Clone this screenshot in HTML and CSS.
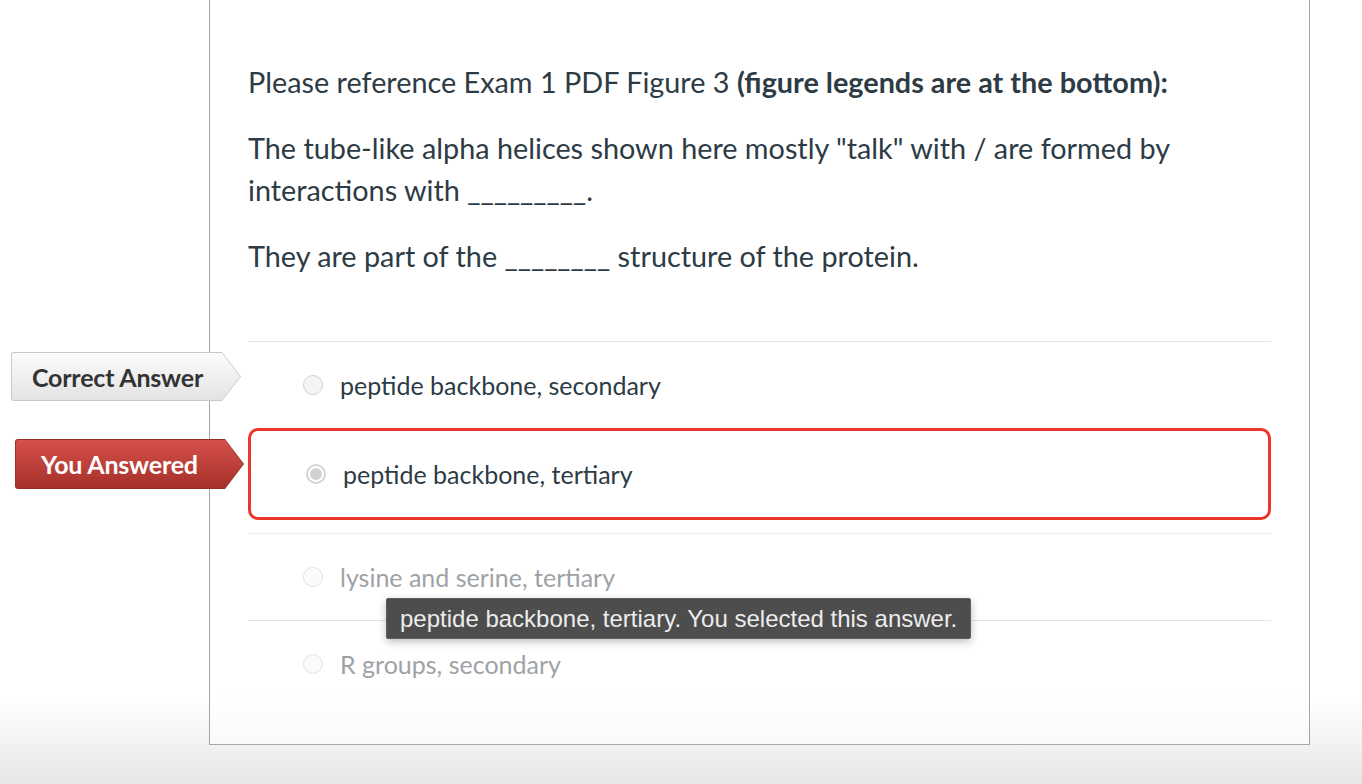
FILE: index.html
```html
<!DOCTYPE html>
<html lang="en">
<head>
    <meta charset="UTF-8">
    <meta name="viewport" content="width=device-width, initial-scale=1.0">
    <title>Quiz Results</title>
    <link rel="stylesheet" href="styles.css">
</head>
<body>
    <div id="page">
        <div id="question">
            <div class="question-text">
                <p>Please reference Exam 1 PDF Figure 3 <strong>(figure legends are at the bottom):</strong></p>
                <p>The tube-like alpha helices shown here mostly "talk" with / are formed by interactions with _________.</p>
                <p>They are part of the ________ structure of the protein.</p>
            </div>

            <div class="answers">
                <div class="answer correct">
                    <span class="answer-label label-correct"><span class="label-inner">Correct Answer</span></span>
                    <span class="radio"></span>
                    <span class="answer-text">peptide backbone, secondary</span>
                </div>
                <div class="answer selected">
                    <span class="answer-label label-wrong"><span class="label-inner">You Answered</span></span>
                    <span class="radio checked"></span>
                    <span class="answer-text">peptide backbone, tertiary</span>
                </div>
                <div class="answer faded">
                    <span class="radio"></span>
                    <span class="answer-text">lysine and serine, tertiary</span>
                    <span class="tooltip">peptide backbone, tertiary. You selected this answer.</span>
                </div>
                <div class="answer faded">
                    <span class="radio"></span>
                    <span class="answer-text">R groups, secondary</span>
                </div>
            </div>
        </div>
    </div>
</body>
</html>
```

FILE: styles.css
```css
html, body {
    margin: 0;
    height: 100%;
}
body {
    font-family: Lato, "Open Sans", sans-serif;
    color: #2d3b45;
    background: linear-gradient(to bottom, #ffffff 0, #ffffff 700px, #e6e6e6 784px);
    overflow: hidden;
}
#page {
    padding-left: 209px;
    width: 1101px;
}
#question {
    border: 1px solid #a5a5a5;
    border-top: none;
    padding: 61px 38px 38px 38px;
    height: 745px;
    box-sizing: border-box;
    background: linear-gradient(to bottom, #ffffff 0, #ffffff 690px, #fafafa 744px);
}
.question-text {
    font-size: 28.8px;
    line-height: 42px;
    padding-bottom: 64px;
}
.question-text p {
    margin: 0 0 24px 0;
}
.question-text p:last-child {
    margin-bottom: 0;
}
.question-text strong {
    font-weight: 700;
}
.answers {
    width: 1023px;
}
.answer {
    position: relative;
    display: flex;
    align-items: center;
    height: 86px;
    padding-left: 55px;
    border-top: 1px solid #e4e4e4;
    font-size: 25px;
}
.answer.selected {
    height: 86px;
    padding-left: 55px;
    border: 3px solid #e9352a;
    border-radius: 10px;
    margin-bottom: 13px;
}
.answer.selected + .answer {
    border-top-color: #ececec;
}
.radio {
    width: 18px;
    height: 18px;
    border: 1px solid #d2d2d2;
    border-radius: 50%;
    background: #f4f4f4;
    margin-right: 17px;
    flex-shrink: 0;
    display: flex;
    align-items: center;
    justify-content: center;
}
.radio.checked {
    border: 2px solid #d4d4d4;
    width: 16px;
    height: 16px;
    background: #fff;
}
.radio.checked::after {
    content: "";
    width: 12px;
    height: 12px;
    border-radius: 50%;
    background: #d2d2d2;
}
.faded .radio {
    border-color: #e2e2e2;
    background: #fbfbfb;
}
.faded .answer-text {
    color: #9ea2a6;
}

/* arrow labels sit over the panel's left edge */
.answer-label {
    position: absolute;
    top: 10px;
    height: 49px;
    padding: 1px;
    box-sizing: border-box;
    clip-path: polygon(0 0, calc(100% - 19px) 0, 100% 50%, calc(100% - 19px) 100%, 0 100%);
    display: flex;
    border-radius: 3px;
}
.label-inner {
    flex: 1;
    display: flex;
    align-items: center;
    padding-left: 20px;
    font-size: 25px;
    font-weight: 700;
    letter-spacing: -0.2px;
    border-radius: 2px;
    clip-path: polygon(0 0, calc(100% - 18px) 0, 100% 50%, calc(100% - 18px) 100%, 0 100%);
}
.label-correct {
    left: -237px;
    width: 230px;
    background: #c8c8c8;
}
.label-correct .label-inner {
    background: linear-gradient(to bottom, #fcfcfc, #e3e3e3);
    color: #333;
}
.label-wrong {
    left: -236px;
    top: 8px;
    width: 229px;
    height: 50px;
    background: #9a2d28;
}
.label-wrong .label-inner {
    padding-left: 25px;
    background: linear-gradient(to bottom, #d5514a, #a6302a);
    color: #fff;
}

.tooltip {
    position: absolute;
    left: 138px;
    top: 64px;
    height: 39px;
    padding: 0 13px;
    display: flex;
    align-items: center;
    background: #4d4d4d;
    border: 1px solid #5e5e5e;
    border-radius: 2px;
    box-shadow: 0 3px 8px rgba(0, 0, 0, 0.25);
    color: #ececec;
    font-family: "Liberation Sans", Arial, sans-serif;
    font-size: 24px;
    white-space: nowrap;
    z-index: 2;
}
```
